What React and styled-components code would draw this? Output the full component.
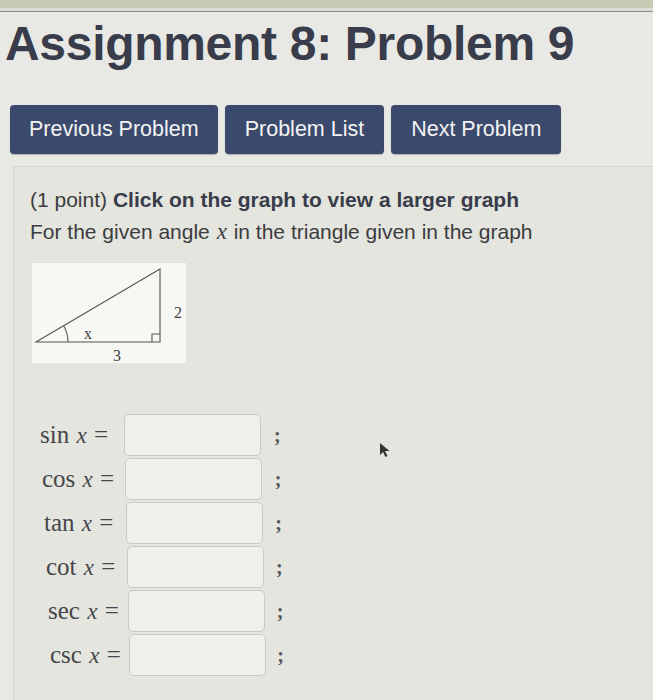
import styled, { createGlobalStyle } from "styled-components";

const GlobalStyle = createGlobalStyle`
  html, body {
    margin: 0;
    padding: 0;
    background: #e8e8e4;
    overflow: hidden;
  }
  body {
    font-family: "Liberation Sans", Arial, Helvetica, sans-serif;
  }
`;

const rows = [
  { fn: "sin", shift: 0 },
  { fn: "cos", shift: 2 },
  { fn: "tan", shift: 4 },
  { fn: "cot", shift: 6 },
  { fn: "sec", shift: 8 },
  { fn: "csc", shift: 10 },
];

const Page = styled.div`
  min-height: 700px;
  display: flex;
  flex-direction: column;
`;

const TopStrip = styled.div`
  height: 8px;
  background: #c6cab3;
  border-bottom: 3px solid #dcdcd7;
  box-shadow: 0 1px 0 #8c8e8a;
`;

const Title = styled.h1`
  margin: 9px 0 0 5px;
  font-size: 48px;
  line-height: 48px;
  font-weight: 700;
  color: #393c4a;
  letter-spacing: -0.3px;
`;

const NavBar = styled.div`
  display: flex;
  gap: 7px;
  margin: 37px 0 0 10px;
`;

const NavButton = styled.button`
  height: 49px;
  padding: 0 ${(p) => p.$pad}px;
  border: none;
  border-radius: 4px;
  background: #3b4a6c;
  color: #f3f3f3;
  font-family: inherit;
  font-size: 21.5px;
  box-shadow: 0 1px 1px rgba(0, 0, 0, 0.25);
  cursor: pointer;
`;

const Panel = styled.section`
  position: relative;
  flex: 1;
  margin: 12px 0 0 13px;
  padding: 17px 0 0 16px;
  background: #e3e5de;
  border-top: 1px solid #d2d4cb;
  border-left: 1px solid #d2d4cb;
`;

const Prompt = styled.p`
  margin: 0;
  font-size: 21px;
  line-height: 31.5px;
  color: #3c3c40;
`;

const Strong = styled.strong`
  color: #393c4a;
`;

const MathVar = styled.i`
  font-family: "Liberation Serif", "Times New Roman", serif;
  font-size: 23px;
  padding: 0 1px;
`;

const Figure = styled.div`
  width: 154px;
  height: 100px;
  margin: 16px 0 0 2px;
  background: #f7f7f4;
`;

const Answers = styled.div`
  display: grid;
  grid-template-columns: 74px 137px 20px;
  column-gap: 10px;
  row-gap: 2px;
  align-items: center;
  margin: 51px 0 0 10px;
`;

const Label = styled.span`
  font-family: "Liberation Serif", "Times New Roman", serif;
  font-size: 25px;
  color: #45454a;
  white-space: nowrap;
  padding-left: ${(p) => p.$shift}px;
`;

const Answer = styled.input`
  box-sizing: border-box;
  width: 137px;
  height: 42px;
  margin-left: ${(p) => p.$shift}px;
  border: 1px solid #cacac5;
  border-radius: 5px;
  background: #efefec;
  outline: none;
`;

const Semi = styled.span`
  font-family: "Liberation Serif", "Times New Roman", serif;
  font-size: 20px;
  font-weight: 700;
  color: #55555a;
  padding-left: ${(p) => 3 + p.$shift / 3}px;
`;

const Cursor = styled.svg`
  position: absolute;
  left: 365px;
  top: 275px;
`;

const Triangle = () => (
  <svg width="154" height="100" viewBox="0 0 154 100">
    <g fill="none" stroke="#555" strokeWidth="1.1">
      <path d="M4 79 L128 79 L128 6 Z" />
      <path d="M120 79 V71 H128" />
      <path d="M36 79 A32 32 0 0 0 31.6 62.8" />
    </g>
    <g
      fill="#444"
      fontFamily="'Liberation Serif', 'Times New Roman', serif"
      fontSize="16"
    >
      <text x="52" y="76">x</text>
      <text x="142" y="55">2</text>
      <text x="81" y="98">3</text>
    </g>
  </svg>
);

export default function App() {
  return (
    <Page>
      <GlobalStyle />
      <TopStrip />
      <Title>Assignment 8: Problem 9</Title>
      <NavBar>
        <NavButton $pad={19}>Previous Problem</NavButton>
        <NavButton $pad={20}>Problem List</NavButton>
        <NavButton $pad={20}>Next Problem</NavButton>
      </NavBar>
      <Panel>
        <Prompt>
          (1 point) <Strong>Click on the graph to view a larger graph</Strong>
        </Prompt>
        <Prompt>
          For the given angle <MathVar>x</MathVar> in the triangle given in the
          graph
        </Prompt>
        <Figure>
          <Triangle />
        </Figure>
        <Answers>
          {rows.map((r) => (
            <Row key={r.fn} {...r} />
          ))}
        </Answers>
        <Cursor width="12" height="16" viewBox="0 0 12 16">
          <path d="M1 1 L1 13 L4 10 L6.5 15 L8.5 14 L6 9 L10.5 9 Z" fill="#333" />
        </Cursor>
      </Panel>
    </Page>
  );
}

function Row({ fn, shift }) {
  return (
    <>
      <Label $shift={shift}>
        {fn} <MathVar>x</MathVar> =
      </Label>
      <Answer $shift={shift / 2} aria-label={`${fn} x`} />
      <Semi $shift={shift}>;</Semi>
    </>
  );
}
